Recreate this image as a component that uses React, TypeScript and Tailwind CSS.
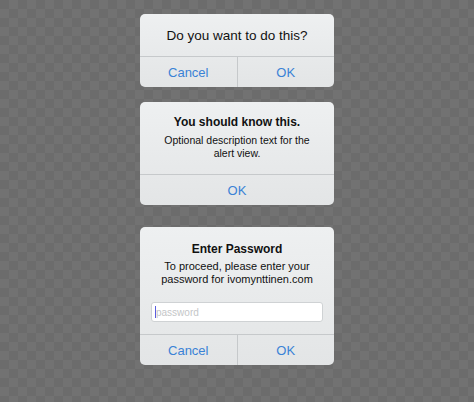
import React from "react";

// Simple iOS 7 style alert views stacked on a transparent-looking canvas

const font = { fontFamily: '"Liberation Sans", Arial, Helvetica, sans-serif' };

const ButtonRow: React.FC<{ labels: string[] }> = ({ labels }) => (
  <div className="flex h-[31px] border-t border-[#c6c9cb]">
    {labels.map((label, i) => (
      <button
        key={label}
        className={`flex-1 flex items-center justify-center pt-[1px] text-[13px] text-[#3a82d6] ${
          i > 0 ? "border-l border-[#c6c9cb]" : ""
        }`}
      >
        {label}
      </button>
    ))}
  </div>
);

export default function App() {
  return (
    <div
      className="min-h-screen w-full bg-[#6f6f6f] bg-[repeating-conic-gradient(#727272_0%_25%,#6c6c6c_0%_50%)] bg-[length:18px_18px] pt-[14px]"
      style={font}
    >
      {/* Confirm */}
      <div className="mx-auto w-[194px] rounded-[5px] bg-gradient-to-b from-[#eef0f1] to-[#e3e5e6] overflow-hidden">
        <div className="h-[42px] flex items-center justify-center pt-[2px] text-[13.5px] text-[#111]">
          Do you want to do this?
        </div>
        <ButtonRow labels={["Cancel", "OK"]} />
      </div>

      {/* Info */}
      <div className="mx-auto mt-[15px] w-[194px] rounded-[5px] bg-gradient-to-b from-[#eef0f1] to-[#e3e5e6] overflow-hidden">
        <div className="px-5 pt-[13px] pb-[15px] text-center text-[#111]">
          <div className="text-[12px] leading-[14px] font-bold">You should know this.</div>
          <p className="mt-[5px] text-[10.5px] leading-[12.5px]">
            Optional description text for the alert view.
          </p>
        </div>
        <ButtonRow labels={["OK"]} />
      </div>

      {/* Password */}
      <div className="mx-auto mt-[22px] w-[194px] rounded-[5px] bg-gradient-to-b from-[#eef0f1] to-[#e3e5e6] overflow-hidden">
        <div className="pt-[15px] pb-[12px] text-center text-[#111]">
          <div className="text-[12px] leading-[14px] font-bold">Enter Password</div>
          <p className="mt-[4px] px-4 text-[11px] leading-[13px]">
            To proceed, please enter your password for ivomynttinen.com
          </p>
          <div className="mx-[11px] mt-[16px] h-[20px] rounded-[3px] border border-[#cfd2d4] bg-white flex items-center pl-[3px]">
            <span className="w-[1px] h-[12px] bg-[#5a5ee0]" />
            <input
              type="password"
              placeholder="password"
              className="flex-1 min-w-0 bg-transparent outline-none text-[10px] placeholder:text-[#c4c6c8] pl-0"
            />
          </div>
        </div>
        <ButtonRow labels={["Cancel", "OK"]} />
      </div>
    </div>
  );
}
